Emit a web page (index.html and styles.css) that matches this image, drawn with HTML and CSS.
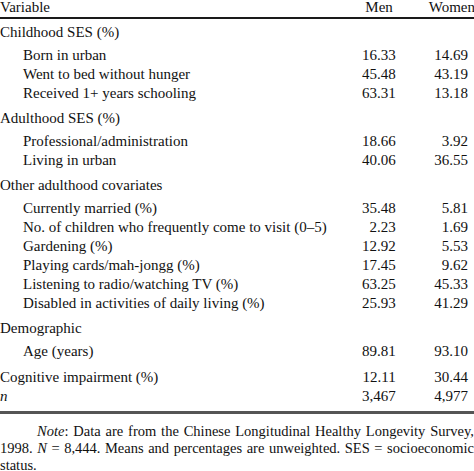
FILE: index.html
```html
<!DOCTYPE html>
<html lang="en">
<head>
  <meta charset="UTF-8">
  <title>Descriptive statistics by sex</title>
  <meta name="viewport" content="width=device-width, initial-scale=1">
  <link rel="stylesheet" href="styles.css">
</head>
<body>
  <div class="wrap">
    <table class="stats">
      <colgroup>
        <col class="col-var">
        <col class="col-men">
        <col class="col-women">
      </colgroup>
      <thead>
        <tr>
          <th class="var">Variable</th>
          <th class="men">Men</th>
          <th class="women">Women</th>
        </tr>
      </thead>
      <tbody>
        <tr class="section first"><td colspan="3">Childhood SES (%)</td></tr>
        <tr class="item lead"><td>Born in urban</td><td>16.33</td><td>14.69</td></tr>
        <tr class="item"><td>Went to bed without hunger</td><td>45.48</td><td>43.19</td></tr>
        <tr class="item"><td>Received 1+ years schooling</td><td>63.31</td><td>13.18</td></tr>

        <tr class="section"><td colspan="3">Adulthood SES (%)</td></tr>
        <tr class="item lead"><td>Professional/administration</td><td>18.66</td><td>3.92</td></tr>
        <tr class="item"><td>Living in urban</td><td>40.06</td><td>36.55</td></tr>

        <tr class="section"><td colspan="3">Other adulthood covariates</td></tr>
        <tr class="item lead"><td>Currently married (%)</td><td>35.48</td><td>5.81</td></tr>
        <tr class="item"><td>No. of children who frequently come to visit (0–5)</td><td>2.23</td><td>1.69</td></tr>
        <tr class="item"><td>Gardening (%)</td><td>12.92</td><td>5.53</td></tr>
        <tr class="item"><td>Playing cards/mah-jongg (%)</td><td>17.45</td><td>9.62</td></tr>
        <tr class="item"><td>Listening to radio/watching TV (%)</td><td>63.25</td><td>45.33</td></tr>
        <tr class="item"><td>Disabled in activities of daily living (%)</td><td>25.93</td><td>41.29</td></tr>

        <tr class="section"><td colspan="3">Demographic</td></tr>
        <tr class="item lead"><td>Age (years)</td><td>89.81</td><td>93.10</td></tr>

        <tr class="outcome"><td>Cognitive impairment (%)</td><td>12.11</td><td>30.44</td></tr>
        <tr class="total"><td><i>n</i></td><td>3,467</td><td>4,977</td></tr>
      </tbody>
    </table>

    <p class="note">
      <i>Note</i>: Data are from the Chinese Longitudinal Healthy Longevity Survey,
      1998. <i>N</i> = 8,444. Means and percentages are unweighted. SES = socioeconomic
      status.
    </p>
  </div>
</body>
</html>
```

FILE: styles.css
```css
body {
  margin: 0;
  background: #fff;
  color: #111;
  font-family: "Liberation Serif", "Times New Roman", serif;
  font-size: 15px;
}
.wrap {
  width: 474px;
  height: 471px;
  overflow: hidden;
}
/* table */
.stats {
  width: 478px;
  margin-top: -2px;
  border-collapse: collapse;
  line-height: 19px;
}
.col-men { width: 70px; }
.col-women { width: 83px; }
.stats th,
.stats td {
  padding: 0;
  font-weight: normal;
  white-space: nowrap;
}
.stats thead th {
  border-bottom: 2px solid #1a1a1a;
}
.stats th.var { text-align: left; }
.stats th.men { text-align: right; padding-right: 3px; }
.stats th.women { text-align: right; padding-right: 3px; }
.stats td:nth-child(2) { text-align: right; }
.stats td:nth-child(3) { text-align: right; padding-right: 10px; }

.section td {
  padding-top: 6px;
}
.section.first td { padding-top: 4px; }
.item td:first-child { padding-left: 23px; }
.item.lead td { padding-top: 4px; }
.outcome td { padding-top: 7px; }
.total td { padding-bottom: 5px; }
.total { border-bottom: 3px solid #555; }

/* note */
.note {
  margin: 9px 0 0;
  font-size: 14.5px;
  line-height: 17px;
  word-spacing: -1px;
  text-align: justify;
  text-indent: 37px;
}
```
